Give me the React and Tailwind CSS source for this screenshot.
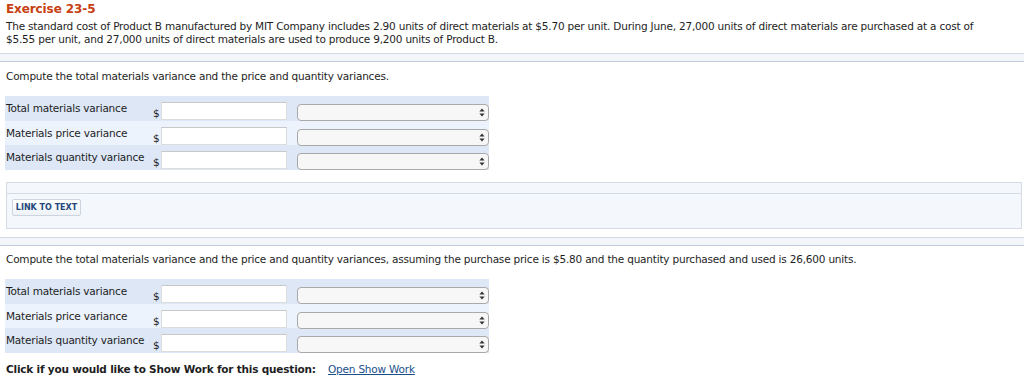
import React from "react";

function SelectBox({ top }) {
  return (
    <div
      className={`relative ml-[10px] h-[17px] w-[192px] rounded-[4px] border border-[#a9a9a9] bg-[#f7f7f7] ${top}`}
    >
      <svg
        className="absolute right-[3px] top-[3px]"
        width="6"
        height="9"
        viewBox="0 0 6 9"
      >
        <path d="M3 0.5 L5.6 3.6 L0.4 3.6 Z" fill="#333" />
        <path d="M3 8.5 L5.6 5.4 L0.4 5.4 Z" fill="#333" />
      </svg>
    </div>
  );
}

function Row({ label, bg, h }) {
  return (
    <div className={`flex items-start ${bg} ${h}`}>
      <div className="w-[148px] shrink-0 whitespace-nowrap pl-[1px] pt-[6px] leading-[13px]">
        {label}
      </div>
      <div className="flex items-end pt-[6px]">
        <span className="mr-[1px] w-[7px] leading-[13px]">$</span>
        <div className="h-[18px] w-[126px] border border-[#dcdcdc] border-t-[#c8c8c8] bg-white" />
      </div>
      <SelectBox top="mt-[7.5px]" />
    </div>
  );
}

function Table({ mt }) {
  return (
    <div className={`ml-[5px] w-[484px] ${mt}`}>
      <Row label="Total materials variance" bg="bg-[#dde7f6]" h="h-[25px]" />
      <Row label="Materials price variance" bg="bg-[#edf3fc]" h="h-[24px]" />
      <Row label="Materials quantity variance" bg="bg-[#dde7f6]" h="h-[25px]" />
    </div>
  );
}

function Separator({ mt }) {
  return (
    <div
      className={`h-[9px] w-full border-t border-b border-t-[#d3dae4] border-b-[#c3cddb] bg-[#f3f6fa] ${mt}`}
    />
  );
}

export default function App() {
  return (
    <div className="h-[385px] w-[1024px] overflow-hidden bg-white font-['DejaVu_Sans','Liberation_Sans',sans-serif] text-[10.5px] tracking-[-0.2px] text-[#1e1e1e]">
      <div className="px-[6px] pt-[3px]">
        <div className="text-[12px] font-bold leading-[13px] tracking-[-0.1px] text-[#c7400f]">
          Exercise 23-5
        </div>
        <p className="mt-[3.5px] leading-[13px] pr-[20px]">
          The standard cost of Product B manufactured by MIT Company includes
          2.90 units of direct materials at $5.70 per unit. During June, 27,000
          units of direct materials are purchased at a cost of $5.55 per unit,
          and 27,000 units of direct materials are used to produce 9,200 units
          of Product B.
        </p>
      </div>
      <Separator mt="mt-[7.5px]" />
      <p className="mt-[7.5px] pl-[6px] leading-[13px]">
        Compute the total materials variance and the price and quantity
        variances.
      </p>
      <Table mt="mt-[13.5px]" />
      <div className="ml-[6px] mt-[12px] w-[1016px] border border-[#d5dce6] bg-[#f4f7fb]">
        <div className="h-[11px] border-b border-[#d5dce6]" />
        <div className="h-[34px] pl-[5px] pt-[5px]">
          <div className="flex h-[17px] w-[69px] items-center justify-center rounded-[2px] border border-[#cdd4de] bg-gradient-to-b from-white to-[#eef2f7] text-[8px] font-bold tracking-normal text-[#25487c]">
            LINK TO TEXT
          </div>
        </div>
      </div>
      <Separator mt="mt-[8px]" />
      <p className="mt-[7px] pl-[6px] leading-[13px]">
        Compute the total materials variance and the price and quantity
        variances, assuming the purchase price is $5.80 and the quantity
        purchased and used is 26,600 units.
      </p>
      <Table mt="mt-[13px]" />
      <div className="mt-[9.5px] flex whitespace-nowrap pl-[6px] leading-[13px]">
        <span className="w-[322px] font-bold">
          Click if you would like to Show Work for this question:
        </span>
        <span className="text-[#1a4f8c] underline">Open Show Work</span>
      </div>
    </div>
  );
}
